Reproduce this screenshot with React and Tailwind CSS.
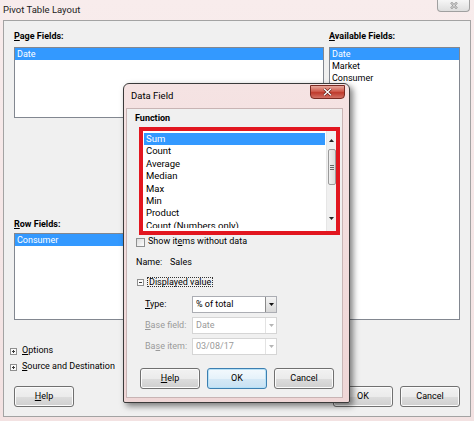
import React from 'react';

const U = ({ children }) => <span className="underline underline-offset-[1px] decoration-[0.5px]">{children}</span>;

function ListBox({ items, selected, className = '' }) {
  return (
    <div className={`bg-white border border-[#828790] ${className}`}>
      {items.map((it, i) => (
        <div
          key={it}
          className={`h-[12px] leading-[12px] pl-[2px] ${i === selected ? 'bg-[#3399ff] text-white' : 'text-black'}`}
        >
          {it}
        </div>
      ))}
    </div>
  );
}

function WinButton({ children, focused = false }) {
  return (
    <div
      className={`h-[21px] w-[60px] flex items-center justify-center rounded-[3px] border ${
        focused
          ? 'border-[#3c7fb1] bg-[linear-gradient(#f3f9fd,#e6f2fa_50%,#d6e9f6_50%,#c7e1f3)] shadow-[inset_0_0_0_1px_#b6e1f7]'
          : 'border-[#707070] bg-[linear-gradient(#f2f2f2,#ebebeb_50%,#dddddd_50%,#cfcfcf)] shadow-[inset_0_0_0_1px_#fbfbfb]'
      }`}
    >
      {children}
    </div>
  );
}

function Expander({ minus = false }) {
  return (
    <svg width="7" height="7" viewBox="0 0 7 7" className="shrink-0">
      <rect x="0.5" y="0.5" width="6" height="6" fill="#fbfbfb" stroke="#8f8f8f" />
      <line x1="2" y1="3.5" x2="5" y2="3.5" stroke="#3a3a3a" />
      {!minus && <line x1="3.5" y1="2" x2="3.5" y2="5" stroke="#3a3a3a" />}
    </svg>
  );
}

function Combo({ value, disabled = false }) {
  return (
    <div
      className={`w-[85px] h-[17px] flex bg-white border ${disabled ? 'border-[#d5d5d5] text-[#9a9a9a]' : 'border-[#abadb3] text-black'}`}
    >
      <div className="flex-1 pl-[3px] leading-[15px]">{value}</div>
      <div
        className={`w-[11px] flex items-center justify-center border-l ${
          disabled ? 'border-[#e3e3e3] bg-white' : 'border-[#8a8a8a] bg-[linear-gradient(#f4f4f4,#d8d8d8)]'
        }`}
      >
        <svg width="5" height="3" viewBox="0 0 5 3">
          <path d="M0 0 L5 0 L2.5 3 Z" fill={disabled ? '#b5b5b5' : '#111'} />
        </svg>
      </div>
    </div>
  );
}

function DataFieldDialog() {
  const fns = ['Sum', 'Count', 'Average', 'Median', 'Max', 'Min', 'Product', 'Count (Numbers only)'];
  return (
    <div className="absolute left-[123px] top-[83px] w-[227px] h-[320px] rounded-t-[6px] rounded-b-[2px] border border-[#3a3a3a] bg-[linear-gradient(#f5e3e3,#efd6d6)] shadow-[3px_3px_6px_rgba(0,0,0,0.5)] flex flex-col pl-[2px] pr-[6px] pb-[4px]">
      <div className="h-[24px] pl-[5px] flex items-center text-black text-[9.5px]">Data Field</div>
      {/* close */}
      <div className="absolute left-[186px] top-[1px] w-[35px] h-[14px] rounded-b-[4px] border border-[#7a2a22] bg-[linear-gradient(#e7a89c,#cf5a4c_45%,#bf3b2d_55%,#d27064)] flex items-center justify-center">
        <svg width="9" height="8" viewBox="0 0 9 8">
          <path d="M1 0.8 L8 7.2 M8 0.8 L1 7.2" stroke="#5a1a14" strokeWidth="2.6" />
          <path d="M1 0.8 L8 7.2 M8 0.8 L1 7.2" stroke="#ffffff" strokeWidth="1.4" />
        </svg>
      </div>

      <div className="h-[290px] border border-[#c8b4b4] bg-[#f0f0f0] flex flex-col">
        <div className="ml-[8px] mt-[2px] h-[14px] leading-[14px] font-bold">Function</div>

        <div className="ml-[12px] mt-[2px] w-[201px] h-[108px] border-4 border-[#e2161f] flex bg-white">
          <div className="flex-1 h-[97px] overflow-hidden pt-[2px] px-[1px] text-[9.5px]">
            {fns.map((f, i) => (
              <div
                key={f}
                className={`h-[12.4px] leading-[12.4px] pl-[2px] whitespace-nowrap ${i === 0 ? 'bg-[#3399ff] text-white' : 'text-black'}`}
              >
                {f}
              </div>
            ))}
          </div>
          <div className="w-[10px] bg-[#f0f0f0] border-l border-[#e6e6e6] flex flex-col pt-[2px] pb-[6px]">
            <div className="h-[14px] flex items-center justify-center">
              <svg width="5" height="3" viewBox="0 0 5 3">
                <path d="M0 3 L5 3 L2.5 0 Z" fill="#222" />
              </svg>
            </div>
            <div className="mt-[2px] h-[36px] mx-[0.5px] rounded-[2px] border border-[#9a9a9a] bg-[linear-gradient(90deg,#f0f0f0,#dcdcdc)] flex flex-col items-center justify-center gap-[1px]">
              <div className="w-[4px] h-[1px] bg-[#666]" />
              <div className="w-[4px] h-[1px] bg-[#666]" />
              <div className="w-[4px] h-[1px] bg-[#666]" />
            </div>
            <div className="flex-1" />
            <div className="h-[14px] flex items-center justify-center">
              <svg width="5" height="3" viewBox="0 0 5 3">
                <path d="M0 0 L5 0 L2.5 3 Z" fill="#222" />
              </svg>
            </div>
          </div>
        </div>

        <div className="ml-[9px] mt-[1px] h-[12px] flex items-center gap-[3px]">
          <div className="w-[9px] h-[9px] border border-[#8e8f8f] bg-[linear-gradient(135deg,#dcdcdc,#fdfdfd)]" />
          <span>
            Show it<U>e</U>ms without data
          </span>
        </div>

        <div className="ml-[9px] mt-[8px] h-[12px] leading-[12px] flex">
          <span className="w-[34px]">Name:</span>
          <span>Sales</span>
        </div>

        <div className="ml-[10px] mt-[8px] h-[12px] flex items-center gap-[3px]">
          <Expander minus />
          <span className="h-[10px] leading-[9px] px-[1px] border border-dotted border-[#333]">Displayed value</span>
        </div>

        <div className="ml-[18px] mt-[8px] flex items-center">
          <span className="w-[47px]">
            <U>T</U>ype:
          </span>
          <Combo value="% of total" />
        </div>
        <div className="ml-[18px] mt-[4px] flex items-center text-[#9a9a9a]">
          <span className="w-[47px]">
            <U>B</U>ase field:
          </span>
          <Combo value="Date" disabled />
        </div>
        <div className="ml-[18px] mt-[4px] flex items-center text-[#9a9a9a]">
          <span className="w-[47px]">
            Ba<U>s</U>e item:
          </span>
          <Combo value="03/08/17" disabled />
        </div>

        <div className="ml-[13px] mt-[13px] flex gap-[7px]">
          <WinButton>
            <span>
              <U>H</U>elp
            </span>
          </WinButton>
          <WinButton focused>OK</WinButton>
          <WinButton>Cancel</WinButton>
        </div>
      </div>
    </div>
  );
}

export default function App() {
  return (
    <div className="relative w-[474px] h-[421px] overflow-hidden bg-[linear-gradient(#f8ecec,#f3e2e2)] font-['Roboto','Noto_Sans',sans-serif] text-[9px] text-black">
      {/* title bar */}
      <div className="relative h-[20px] pl-[3px] flex items-center text-[#222] text-[9.5px]">
        Pivot Table Layout
        <div className="absolute left-[437px] top-0 w-[33px] h-[12px] rounded-b-[4px] border border-t-0 border-[#a0a0a0] bg-[linear-gradient(#f6f6f6,#dedede)] flex items-center justify-center">
          <svg width="8" height="7" viewBox="0 0 8 7">
            <path d="M1 0.5 L7 6.5 M7 0.5 L1 6.5" stroke="#8a8a8a" strokeWidth="2.2" />
            <path d="M1 0.5 L7 6.5 M7 0.5 L1 6.5" stroke="#f4f4f4" strokeWidth="1" />
          </svg>
        </div>
      </div>

      {/* main panel */}
      <div className="mx-[3px] h-[397px] border border-[#a3a3a3] bg-[#f0f0f0] pl-[10px] pr-[10px] pt-[8px] flex flex-col">
        <div className="flex gap-[5px]">
          <div className="w-[310px] flex flex-col">
            <div className="h-[14px] leading-[14px] font-bold mb-[4px]">
              <U>P</U>age Fields:
            </div>
            <ListBox items={['Date']} selected={0} className="h-[71px]" />
            <div className="h-[99px]" />
            <div className="h-[14px] leading-[14px] font-bold mb-[2px]">
              <U>R</U>ow Fields:
            </div>
            <ListBox items={['Consumer']} selected={0} className="h-[87px] w-[150px]" />
          </div>
          <div className="w-[131px] flex flex-col">
            <div className="h-[14px] leading-[14px] font-bold mb-[4px]">
              <U>A</U>vailable Fields:
            </div>
            <ListBox items={['Date', 'Market', 'Consumer']} selected={0} className="h-[273px]" />
          </div>
        </div>

        <div className="mt-[23px] flex flex-col">
          <div className="h-[16px] flex items-center gap-[5px] -ml-[4px]">
            <Expander />
            <span>
              <U>O</U>ptions
            </span>
          </div>
          <div className="h-[16px] flex items-center gap-[5px] -ml-[4px]">
            <Expander />
            <span>
              <U>S</U>ource and Destination
            </span>
          </div>
        </div>

        <div className="mt-[11px] flex justify-between">
          <WinButton>
            <span>
              <U>H</U>elp
            </span>
          </WinButton>
          <div className="flex gap-[7px]">
            <WinButton>OK</WinButton>
            <WinButton>Cancel</WinButton>
          </div>
        </div>
      </div>

      <DataFieldDialog />
    </div>
  );
}
